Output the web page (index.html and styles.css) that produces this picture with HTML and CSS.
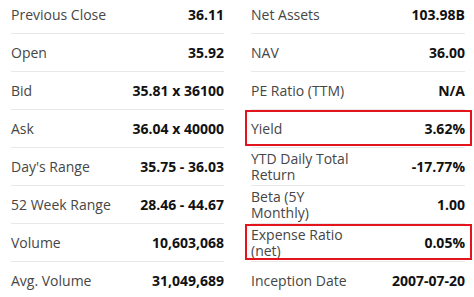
FILE: index.html
```html
<!DOCTYPE html>
<html>
<head>
<meta charset="utf-8">
<link rel="stylesheet" href="styles.css">
</head>
<body>
<div class="stats">
  <div class="col">
    <div class="row"><span class="label">Previous Close</span><span class="value">36.11</span></div>
    <div class="row"><span class="label">Open</span><span class="value">35.92</span></div>
    <div class="row"><span class="label">Bid</span><span class="value">35.81 x 36100</span></div>
    <div class="row"><span class="label">Ask</span><span class="value">36.04 x 40000</span></div>
    <div class="row"><span class="label">Day's Range</span><span class="value">35.75 - 36.03</span></div>
    <div class="row"><span class="label">52 Week Range</span><span class="value">28.46 - 44.67</span></div>
    <div class="row"><span class="label">Volume</span><span class="value">10,603,068</span></div>
    <div class="row"><span class="label">Avg. Volume</span><span class="value">31,049,689</span></div>
  </div>
  <div class="col">
    <div class="row"><span class="label">Net Assets</span><span class="value">103.98B</span></div>
    <div class="row"><span class="label">NAV</span><span class="value">36.00</span></div>
    <div class="row"><span class="label">PE Ratio (TTM)</span><span class="value">N/A</span></div>
    <div class="row marked"><span class="label">Yield</span><span class="value">3.62%</span></div>
    <div class="row"><span class="label">YTD Daily Total Return</span><span class="value">-17.77%</span></div>
    <div class="row"><span class="label">Beta (5Y Monthly)</span><span class="value">1.00</span></div>
    <div class="row marked"><span class="label">Expense Ratio (net)</span><span class="value">0.05%</span></div>
    <div class="row"><span class="label">Inception Date</span><span class="value">2007-07-20</span></div>
  </div>
</div>
</body>
</html>
```

FILE: styles.css
```css
html, body {
  margin: 0;
  padding: 0;
  background: #ffffff;
}
body {
  font-family: "Open Sans", "Noto Sans", sans-serif;
  font-size: 14px;
  color: #464646;
  overflow: hidden;
}
.stats {
  display: grid;
  grid-template-columns: 213px 214px;
  column-gap: 27px;
  padding-left: 11px;
  margin-top: -4px;
}
.col {
  display: flex;
  flex-direction: column;
}
.row {
  position: relative;
  display: flex;
  justify-content: space-between;
  align-items: center;
  box-sizing: border-box;
  height: 38px;
  border-bottom: 1px solid #e8e8e8;
  line-height: 16px;
}
.label {
  max-width: 110px;
}
.value {
  font-weight: 700;
  color: #111111;
  text-align: right;
}
.marked::after {
  content: "";
  position: absolute;
  top: 0;
  bottom: 1px;
  left: -6px;
  right: -7px;
  border: 2px solid #e3141c;
}
```
